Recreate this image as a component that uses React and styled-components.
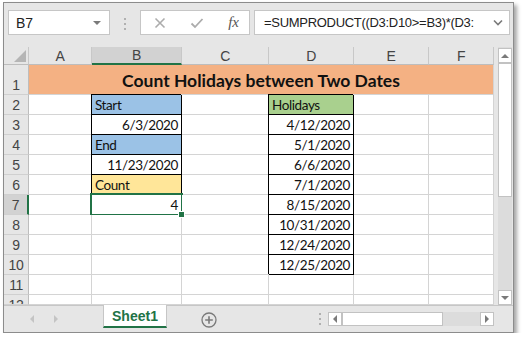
import styled, { createGlobalStyle } from 'styled-components';

const Global = createGlobalStyle`
  body {
    margin: 0;
    background: #fff;
  }
`;

const GREEN = '#217346';
const GRID = '#d4d4d4';

const Window = styled.div`
  box-sizing: border-box;
  margin: 2px 0 0 3px;
  width: 511px;
  height: 331px;
  border: 1px solid #8c8c8c;
  background: #e6e6e6;
  box-shadow: 3px 3px 4px rgba(0, 0, 0, 0.35);
  display: flex;
  flex-direction: column;
  overflow: hidden;
`;

const FormulaBar = styled.div`
  height: 44px;
  flex: none;
  display: flex;
  align-items: flex-start;
  padding: 7px 0 0 4px;
  box-sizing: border-box;
  font-family: 'Liberation Sans', Arial, sans-serif;
`;

const Field = styled.div`
  box-sizing: border-box;
  height: 25px;
  width: ${p => p.$w}px;
  background: #fff;
  border: 1px solid #c6c6c6;
  display: flex;
  align-items: center;
  font-size: 14px;
  color: #222;
`;

const NameText = styled.span`
  flex: 1;
  padding-left: 7px;
`;

const Caret = styled.span`
  width: 0;
  height: 0;
  border-left: 4px solid transparent;
  border-right: 4px solid transparent;
  border-top: 4px solid #7a7a7a;
  margin-right: 8px;
`;

const VDots = styled.div`
  width: ${p => p.$w}px;
  align-self: ${p => p.$center ? 'center' : 'auto'};
  display: flex;
  flex-direction: column;
  align-items: center;
  gap: 3px;
  padding-top: ${p => p.$top || 0}px;

  i {
    width: 2px;
    height: 2px;
    background: #b0b0b0;
  }
`;

const Fx = styled.span`
  font-family: 'Liberation Serif', 'Times New Roman', serif;
  font-style: italic;
  font-size: 15px;
  color: #555;
  margin-left: auto;
  margin-right: 10px;
`;

const IconSlot = styled.span`
  display: flex;
  width: 37px;
  justify-content: center;
`;

const FormulaText = styled.span`
  flex: 1;
  padding-left: 9px;
  white-space: nowrap;
  overflow: hidden;
  font-size: 13px;
  letter-spacing: -0.3px;
`;

const Chevron = styled.svg`
  margin-right: 6px;
  flex: none;
`;

const Main = styled.div`
  height: 258px;
  flex: none;
  display: flex;
`;

const Sheet = styled.div`
  display: grid;
  grid-template-columns: 25px 63px 90px 87px 85px 75px 65px;
  grid-template-rows: 18px 30px repeat(10, 20px) 10px;
  background: #fff;
  overflow: hidden;
  font-family: Lato, 'Liberation Sans', sans-serif;
  font-size: 13.5px;
  letter-spacing: -0.4px;
  color: #111;
`;

const Head = styled.div`
  box-sizing: border-box;
  background: ${p => p.$active ? '#d2d2d2' : '#e6e6e6'};
  border-right: ${p => p.$row && p.$active ? `2px solid ${GREEN}` : `1px solid ${p.$row ? '#bdbdbd' : '#c8c8c8'}`};
  border-bottom: ${p => !p.$row && p.$active ? `2px solid ${GREEN}` : `1px solid ${p.$row ? '#d0d0d0' : '#bdbdbd'}`};
  display: flex;
  align-items: ${p => p.$clip ? 'flex-start' : p.$row ? 'flex-end' : 'center'};
  justify-content: center;
  padding-bottom: ${p => p.$row && !p.$clip ? 1 : 0}px;
  padding-top: ${p => p.$clip ? 2 : 0}px;
  font-family: 'Liberation Sans', Arial, sans-serif;
  font-size: 14px;
  color: #444;
  overflow: hidden;
  line-height: 16px;
`;

const Corner = styled(Head)`
  align-items: flex-end;
  justify-content: flex-end;
  padding: 0 2px 2px 0;
`;

const Cell = styled.div`
  box-sizing: border-box;
  position: relative;
  border-right: 1px solid ${p => p.$boxed ? '#000' : GRID};
  border-bottom: 1px solid ${p => p.$boxed ? '#000' : GRID};
  box-shadow: ${p => p.$boxed ? '-1px -1px 0 #000' : 'none'};
  background: ${p => p.$fill || '#fff'};
  display: flex;
  align-items: flex-end;
  justify-content: ${p => p.$right ? 'flex-end' : 'flex-start'};
  padding: 0 3px 0 3px;
  line-height: 18px;
  white-space: nowrap;

  ${p => p.$selected && `
    &::after {
      content: '';
      position: absolute;
      top: -2px;
      left: -2px;
      right: -2px;
      bottom: -2px;
      border: 2px solid ${GREEN};
    }
    &::before {
      content: '';
      position: absolute;
      right: -4px;
      bottom: -4px;
      width: 5px;
      height: 5px;
      background: ${GREEN};
      border: 1px solid #fff;
      z-index: 2;
    }
  `}
`;

const Title = styled(Cell)`
  grid-column: 2 / 8;
  justify-content: center;
  align-items: center;
  font-weight: 700;
  font-size: 17.5px;
  letter-spacing: 0;
  padding-top: 2px;
`;

const Side = styled.div`
  flex: 1;
  display: flex;
  padding-left: 4px;
`;

const VScroll = styled.div`
  width: 14px;
  display: flex;
  flex-direction: column;
  background: #dcdcdc;
`;

const ScrollBtn = styled.div`
  box-sizing: border-box;
  flex: none;
  width: 14px;
  height: ${p => p.$h || 14}px;
  background: #fff;
  border: 1px solid #c2c2c2;
  display: flex;
  align-items: center;
  justify-content: center;
`;

const Thumb = styled.div`
  box-sizing: border-box;
  background: #fff;
  border: 1px solid #c2c2c2;
  ${p => p.$horizontal ? `width: ${p.$len}px; height: 14px;` : `height: ${p.$len}px; width: 14px;`}
`;

const Tri = styled.span`
  width: 0;
  height: 0;
  border: ${p => p.$size || 4}px solid transparent;
  ${p => `border-${p.$dir}: ${p.$size || 4}px solid ${p.$color || '#7a7a7a'};`}
  ${p => p.$dir === 'bottom' && 'margin-top: -4px;'}
  ${p => p.$dir === 'top' && 'margin-bottom: -4px;'}
  ${p => p.$dir === 'left' && 'margin-right: -4px;'}
  ${p => p.$dir === 'right' && 'margin-left: -4px;'}
`;

const TabBar = styled.div`
  flex: 1;
  display: flex;
  align-items: stretch;
  border-top: 1px solid #c6c6c6;
  font-family: 'Liberation Sans', Arial, sans-serif;
`;

const Nav = styled.div`
  width: 99px;
  display: flex;
  align-items: center;
  padding-left: 26px;
  gap: 20px;
  box-sizing: border-box;
`;

const Tab = styled.div`
  box-sizing: border-box;
  width: 64px;
  height: 23px;
  margin-top: -1px;
  background: #fff;
  border-left: 1px solid #c6c6c6;
  border-right: 1px solid #c6c6c6;
  border-bottom: 2px solid ${GREEN};
  display: flex;
  align-items: center;
  justify-content: center;
  font-weight: 700;
  font-size: 14px;
  color: ${GREEN};
`;

const AddBtn = styled.div`
  width: 84px;
  display: flex;
  align-items: center;
  justify-content: center;
  padding-top: 2px;
  box-sizing: border-box;
`;

const HScroll = styled.div`
  display: flex;
  align-items: center;
  margin-left: auto;
  margin-right: 19px;
  height: 14px;
  align-self: center;
  background: #dcdcdc;
  width: 166px;
`;

const Spacer = styled.div`
  flex: 1;
`;

const columns = ['A', 'B', 'C', 'D', 'E', 'F'];

const bCol = {
  2: { text: 'Start', fill: '#9bc2e6' },
  3: { text: '6/3/2020', right: true },
  4: { text: 'End', fill: '#9bc2e6' },
  5: { text: '11/23/2020', right: true },
  6: { text: 'Count', fill: '#ffe699' },
  7: { text: '4', right: true, selected: true },
};

const dCol = {
  2: { text: 'Holidays', fill: '#a9d08e' },
  3: { text: '4/12/2020', right: true },
  4: { text: '5/1/2020', right: true },
  5: { text: '6/6/2020', right: true },
  6: { text: '7/1/2020', right: true },
  7: { text: '8/15/2020', right: true },
  8: { text: '10/31/2020', right: true },
  9: { text: '12/24/2020', right: true },
  10: { text: '12/25/2020', right: true },
};

function Dots({ w, top, center }) {
  return (
    <VDots $w={w} $top={top} $center={center}>
      <i /><i /><i />
    </VDots>
  );
}

function Row({ n }) {
  const cells = columns.map((c) => {
    const data = c === 'B' ? bCol[n] : c === 'D' ? dCol[n] : null;
    if (!data) return <Cell key={c} />;
    return (
      <Cell
        key={c}
        $boxed
        $fill={data.fill}
        $right={data.right}
        $selected={data.selected}
      >
        {data.text}
      </Cell>
    );
  });
  return (
    <>
      <Head $row $active={n === 7} $clip={n === 12}>{n}</Head>
      {cells}
    </>
  );
}

export default function App() {
  const rows = [2, 3, 4, 5, 6, 7, 8, 9, 10, 11, 12];
  return (
    <>
      <Global />
      <Window>
        <FormulaBar>
          <Field $w={102}>
            <NameText>B7</NameText>
            <Caret />
          </Field>
          <Dots w={30} top={8} />
          <Field $w={110}>
            <IconSlot>
              <svg width="12" height="12" viewBox="0 0 12 12">
                <path d="M1.5 1.5 L10.5 10.5 M10.5 1.5 L1.5 10.5" stroke="#acacac" strokeWidth="1.6" fill="none" />
              </svg>
            </IconSlot>
            <IconSlot>
              <svg width="14" height="12" viewBox="0 0 14 12">
                <path d="M1.5 6.5 L5 10 L12.5 2" stroke="#acacac" strokeWidth="1.8" fill="none" />
              </svg>
            </IconSlot>
            <Fx>fx</Fx>
          </Field>
          <Field $w={256} style={{ marginLeft: 4 }}>
            <FormulaText>=SUMPRODUCT((D3:D10&gt;=B3)*(D3:</FormulaText>
            <Chevron width="10" height="7" viewBox="0 0 10 7">
              <path d="M1 1.5 L5 5.5 L9 1.5" stroke="#7a7a7a" strokeWidth="1.6" fill="none" />
            </Chevron>
          </Field>
        </FormulaBar>

        <Main>
          <Sheet>
            <Corner>
              <svg width="12" height="12" viewBox="0 0 12 12">
                <path d="M12 0 L12 12 L0 12 Z" fill="#b5b5b5" />
              </svg>
            </Corner>
            {columns.map((c) => (
              <Head key={c} $active={c === 'B'}>{c}</Head>
            ))}

            <Head $row>1</Head>
            <Title $fill="#f4b183">Count Holidays between Two Dates</Title>

            {rows.map((n) => <Row key={n} n={n} />)}
          </Sheet>
          <Side>
            <VScroll>
              <ScrollBtn $h={15} style={{ marginTop: 1 }}>
                <Tri $dir="bottom" $size={4} />
              </ScrollBtn>
              <Thumb $len={134} />
              <Spacer />
              <ScrollBtn $h={15}>
                <Tri $dir="top" $size={4} />
              </ScrollBtn>
            </VScroll>
          </Side>
        </Main>

        <TabBar>
          <Nav>
            <Tri $dir="right" $size={4} $color="#c4c4c4" />
            <Tri $dir="left" $size={4} $color="#c4c4c4" />
          </Nav>
          <Tab>Sheet1</Tab>
          <AddBtn>
            <svg width="16" height="16" viewBox="0 0 16 16">
              <circle cx="8" cy="8" r="7" stroke="#7a7a7a" strokeWidth="1.3" fill="none" />
              <path d="M8 4.2 V11.8 M4.2 8 H11.8" stroke="#7a7a7a" strokeWidth="1.6" />
            </svg>
          </AddBtn>
          <Spacer />
          <Dots w={16} center />
          <HScroll>
            <ScrollBtn>
              <Tri $dir="right" $size={4} />
            </ScrollBtn>
            <Thumb $horizontal $len={101} />
            <Spacer />
            <ScrollBtn>
              <Tri $dir="left" $size={4} />
            </ScrollBtn>
          </HScroll>
        </TabBar>
      </Window>
    </>
  );
}
